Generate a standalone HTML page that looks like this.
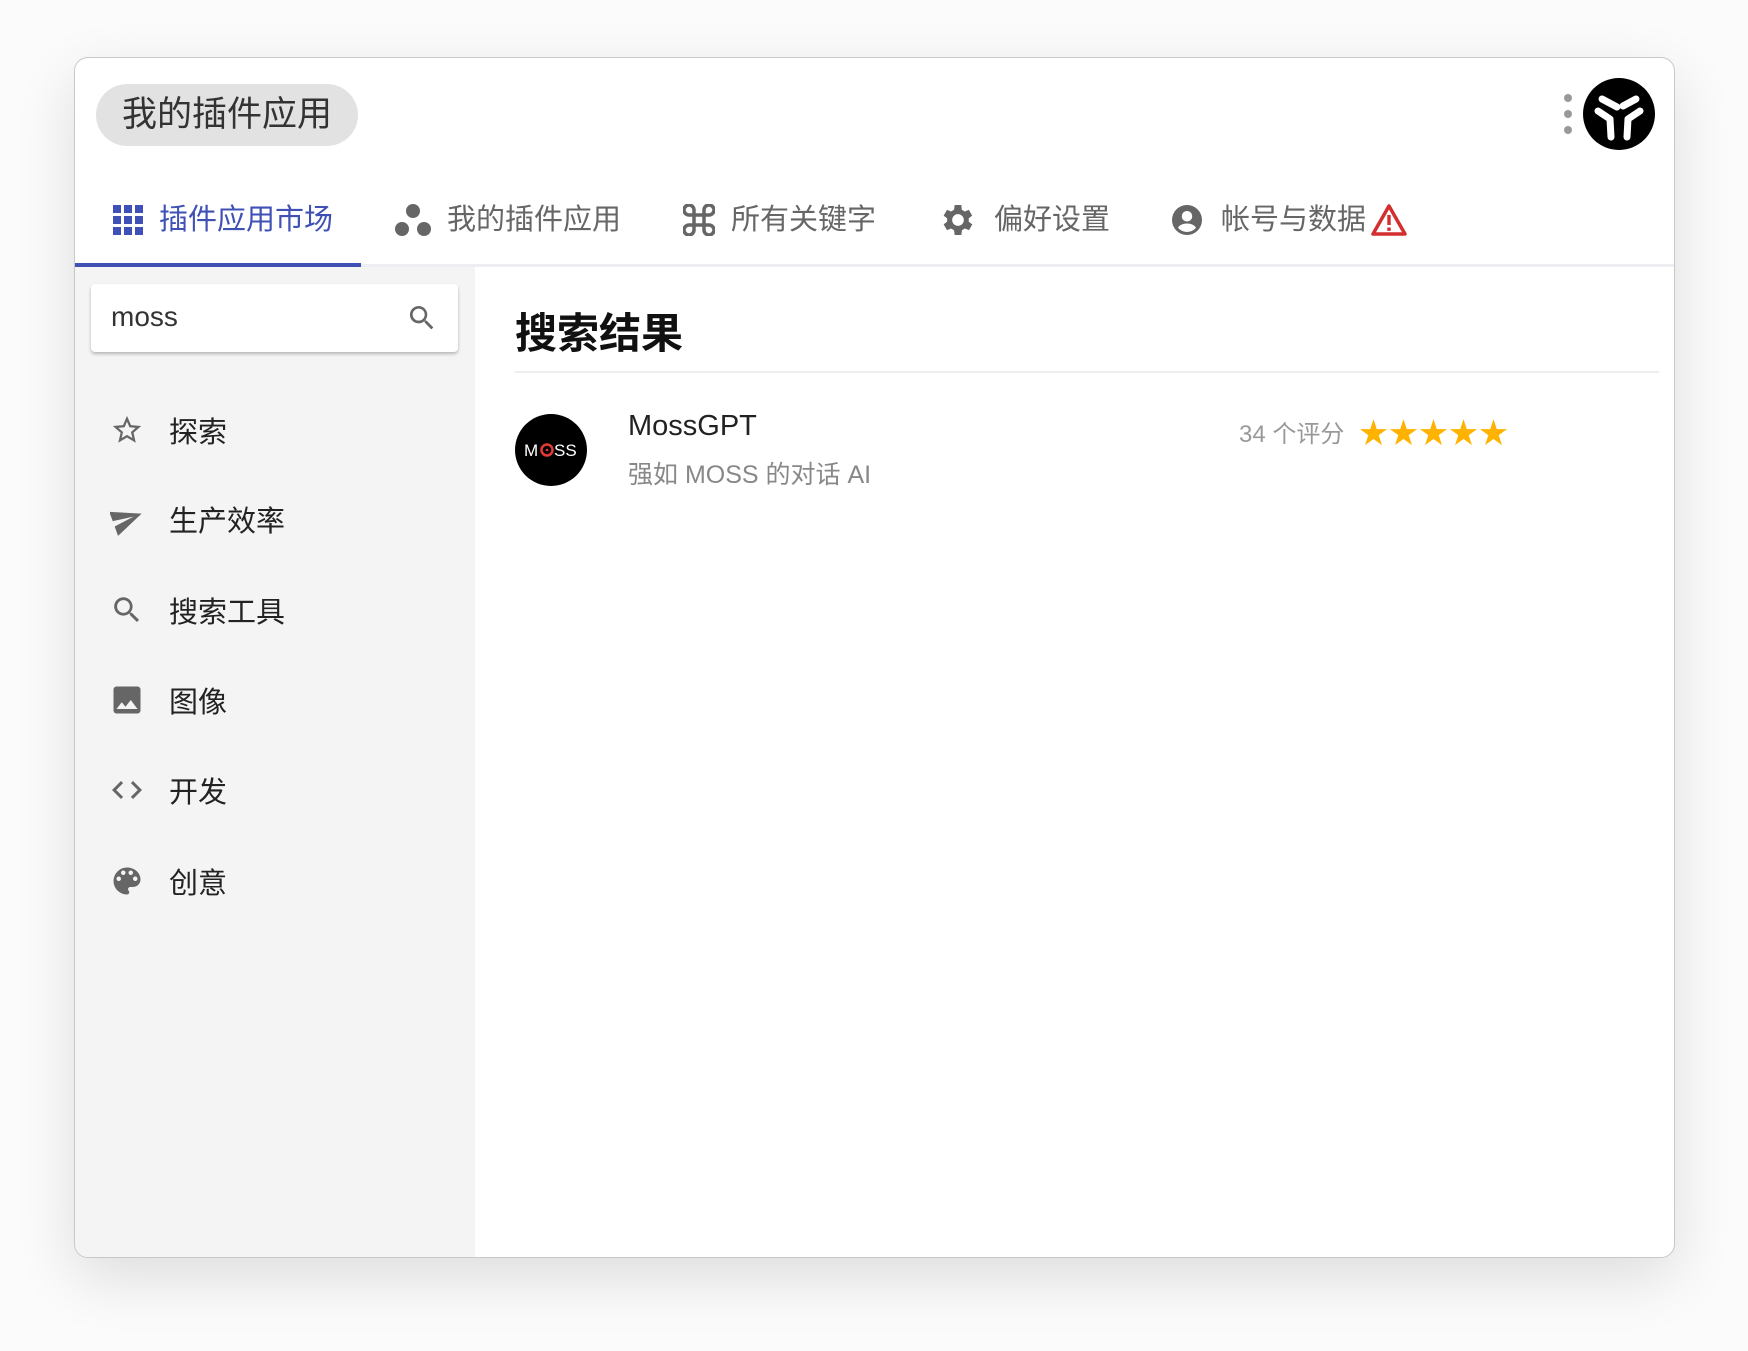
<!DOCTYPE html>
<html><head><meta charset="utf-8"><style>
*{box-sizing:border-box;margin:0;padding:0}
body{width:1748px;height:1351px;background:#fbfbfb;font-family:"Liberation Sans","Noto Sans CJK SC",sans-serif;position:relative;overflow:hidden}
.card{position:absolute;left:74px;top:57px;width:1601px;height:1201px;background:#fff;border:1px solid #c8c8c8;border-radius:14px;overflow:hidden;box-shadow:0 20px 60px rgba(0,0,0,0.12)}
.pill{position:absolute;left:21px;top:26px;width:262px;height:62px;border-radius:31px;background:#e2e2e2;font-size:35px;color:#333;line-height:62px;text-align:center}
.tab{position:absolute;top:142px;height:40px;font-size:29px;color:#666;line-height:40px;display:flex;align-items:center;white-space:nowrap}
.tab svg{margin-right:16px;flex-shrink:0}
.tabline{position:absolute;left:0;top:206px;width:1601px;height:3px;background:#eceef2}
.active{position:absolute;left:0;top:205px;width:286px;height:4px;background:#3f51b5}
.side{position:absolute;left:0;top:209px;width:400px;height:1000px;background:#f4f4f4}
.search{position:absolute;left:16px;top:17px;width:367px;height:68px;background:#fff;border-radius:4px;box-shadow:0 2px 3px rgba(0,0,0,0.25);font-size:28px;color:#333;line-height:66px;padding-left:20px}
.mi{position:absolute;left:34px;height:40px;display:flex;align-items:center;font-size:29px;color:#222}
.mi .ic{width:36px;height:36px;margin-right:24px;display:flex;align-items:center;justify-content:center}
h1{position:absolute;left:440px;top:242px;font-size:42px;font-weight:bold;color:#111}
.div{position:absolute;left:440px;top:313px;width:1144px;height:2px;background:#eee}
</style></head><body>
<div class="card">
<div class="pill">我的插件应用</div>
<svg style="position:absolute;left:1488px;top:35px" width="10" height="44"><circle cx="5" cy="5" r="4" fill="#999"/><circle cx="5" cy="21" r="4" fill="#999"/><circle cx="5" cy="37" r="4" fill="#999"/></svg>
<svg style="position:absolute;left:1508px;top:20px" width="72" height="72" viewBox="0 0 72 72"><circle cx="36" cy="36" r="36" fill="#000"/><g stroke="#fff" stroke-width="7" stroke-linecap="round" stroke-linejoin="round" fill="none"><path d="M19 21 L34 29"/><path d="M53 21 L40 28"/><path d="M15 33 L27 41 L28 59"/><path d="M57 33 L45 41 L44 59"/></g></svg>

<div class="tab" style="left:38px;color:#3f51b5"><svg width="30" height="30" viewBox="0 0 30 30" fill="#3f51b5"><rect x="0" y="0" width="8" height="8"/><rect x="11" y="0" width="8" height="8"/><rect x="22" y="0" width="8" height="8"/><rect x="0" y="11" width="8" height="8"/><rect x="11" y="11" width="8" height="8"/><rect x="22" y="11" width="8" height="8"/><rect x="0" y="22" width="8" height="8"/><rect x="11" y="22" width="8" height="8"/><rect x="22" y="22" width="8" height="8"/></svg>插件应用市场</div>
<div class="tab" style="left:320px"><svg width="36" height="32" viewBox="0 0 36 32" fill="#666"><circle cx="18" cy="7" r="7"/><circle cx="7" cy="25" r="7"/><circle cx="29" cy="25" r="7"/></svg>我的插件应用</div>
<div class="tab" style="left:608px"><svg width="32" height="32" viewBox="0 0 32 32" fill="none" stroke="#666" stroke-width="3.5"><path d="M11 11H21V21H11Z M11 11V6a5 5 0 1 0-5 5H11 M21 11V6a5 5 0 1 1 5 5H21 M11 21v5a5 5 0 1 1-5-5H11 M21 21v5a5 5 0 1 0 5-5H21"/></svg>所有关键字</div>
<div class="tab" style="left:863px"><svg width="40" height="40" viewBox="0 0 24 24" fill="#666"><path d="M19.4 13a7.5 7.5 0 0 0 0-2l2.1-1.6-2-3.5-2.5 1a7 7 0 0 0-1.7-1L15 3h-4l-.4 2.9a7 7 0 0 0-1.7 1l-2.5-1-2 3.5L6.5 11a7.5 7.5 0 0 0 0 2l-2.1 1.6 2 3.5 2.5-1a7 7 0 0 0 1.7 1L11 21h4l.4-2.9a7 7 0 0 0 1.7-1l2.5 1 2-3.5zM13 15.5a3.5 3.5 0 1 1 0-7 3.5 3.5 0 0 1 0 7z" transform="translate(-1 0)"/></svg>偏好设置</div>
<div class="tab" style="left:1094px"><svg width="36" height="36" viewBox="0 0 24 24" fill="#666"><path d="M12 2a10 10 0 1 0 0 20 10 10 0 0 0 0-20zm0 4a3.5 3.5 0 1 1 0 7 3.5 3.5 0 0 1 0-7zm0 14a8 8 0 0 1-6-2.8c.8-1.8 3.5-2.9 6-2.9s5.2 1.1 6 2.9A8 8 0 0 1 12 20z"/></svg>帐号与数据<svg style="margin:0 0 0 4px" width="38" height="34" viewBox="0 0 38 34"><path d="M19 3 L35 31 H3 Z" fill="none" stroke="#d32f2f" stroke-width="3.5" stroke-linejoin="round"/><rect x="17.3" y="12" width="3.4" height="10" fill="#d32f2f"/><rect x="17.3" y="24.5" width="3.4" height="3.4" fill="#d32f2f"/></svg></div>
<div class="tabline"></div><div class="active"></div>

<div class="side">
<div class="search">moss<svg style="position:absolute;right:20px;top:18px" width="32" height="32" viewBox="0 0 24 24" fill="#666"><path d="M15.5 14h-.8l-.3-.3A6.5 6.5 0 1 0 9.5 16a6.5 6.5 0 0 0 4.2-1.6l.3.3v.8l5 5 1.5-1.5zm-6 0a4.5 4.5 0 1 1 0-9 4.5 4.5 0 0 1 0 9z"/></svg></div>
<div class="mi" style="top:143px"><div class="ic"><svg width="34" height="34" viewBox="0 0 24 24" fill="#666"><path d="M22 9.2l-7.2-.6L12 2 9.2 8.6 2 9.2l5.5 4.7L5.8 21 12 17.3 18.2 21l-1.6-7.1zM12 15.4l-3.8 2.3 1-4.3-3.3-2.9 4.4-.4L12 6.1l1.7 4 4.4.4-3.3 2.9 1 4.3z"/></svg></div>探索</div>
<div class="mi" style="top:232px"><div class="ic"><svg width="34" height="34" viewBox="0 0 24 24" fill="#666"><path d="M2 21l21-9L2 3v7l15 2-15 2z" transform="rotate(-20 12 12)"/></svg></div>生产效率</div>
<div class="mi" style="top:323px"><div class="ic"><svg width="34" height="34" viewBox="0 0 24 24" fill="#666"><path d="M15.5 14h-.8l-.3-.3A6.5 6.5 0 1 0 9.5 16a6.5 6.5 0 0 0 4.2-1.6l.3.3v.8l5 5 1.5-1.5zm-6 0a4.5 4.5 0 1 1 0-9 4.5 4.5 0 0 1 0 9z"/></svg></div>搜索工具</div>
<div class="mi" style="top:413px"><div class="ic"><svg width="36" height="36" viewBox="0 0 24 24" fill="#666"><path d="M21 19V5a2 2 0 0 0-2-2H5a2 2 0 0 0-2 2v14a2 2 0 0 0 2 2h14a2 2 0 0 0 2-2zM8.5 13.5l2.5 3 3.5-4.5 4.5 6H5z"/></svg></div>图像</div>
<div class="mi" style="top:503px"><div class="ic"><svg width="36" height="36" viewBox="0 0 24 24" fill="#666"><path d="M9.4 16.6L4.8 12l4.6-4.6L8 6l-6 6 6 6zm5.2 0l4.6-4.6-4.6-4.6L16 6l6 6-6 6z"/></svg></div>开发</div>
<div class="mi" style="top:594px"><div class="ic"><svg width="36" height="36" viewBox="0 0 24 24" fill="#666"><path d="M12 3a9 9 0 0 0 0 18c.8 0 1.5-.7 1.5-1.5 0-.4-.1-.7-.4-1-.2-.3-.4-.6-.4-1 0-.8.7-1.5 1.5-1.5H16a5 5 0 0 0 5-5c0-4.4-4-8-9-8zm-5.5 9a1.5 1.5 0 1 1 0-3 1.5 1.5 0 0 1 0 3zm3-4a1.5 1.5 0 1 1 0-3 1.5 1.5 0 0 1 0 3zm5 0a1.5 1.5 0 1 1 0-3 1.5 1.5 0 0 1 0 3zm3 4a1.5 1.5 0 1 1 0-3 1.5 1.5 0 0 1 0 3z"/></svg></div>创意</div>
</div>

<h1>搜索结果</h1>
<div class="div"></div>
<svg style="position:absolute;left:440px;top:356px" width="72" height="72" viewBox="0 0 72 72"><circle cx="36" cy="36" r="36" fill="#000"/><text x="9" y="42" font-family="Liberation Sans" font-size="17" fill="#fff">M</text><circle cx="32" cy="36" r="5.5" fill="none" stroke="#e53935" stroke-width="2.5"/><circle cx="32" cy="36" r="1.3" fill="#e53935"/><text x="39" y="42" font-family="Liberation Sans" font-size="17" fill="#fff">SS</text></svg>
<div style="position:absolute;left:553px;top:352px;font-size:29px;color:#222">MossGPT</div>
<div style="position:absolute;left:553px;top:397px;font-size:25px;color:#888">强如 MOSS 的对话 AI</div>
<div style="position:absolute;left:1164px;top:356px;font-size:24px;color:#999">34 个评分</div>
<div style="position:absolute;left:1284px;top:352px;font-size:29px;color:#ffb300;letter-spacing:1px">★★★★★</div>
</div>
</body></html>
